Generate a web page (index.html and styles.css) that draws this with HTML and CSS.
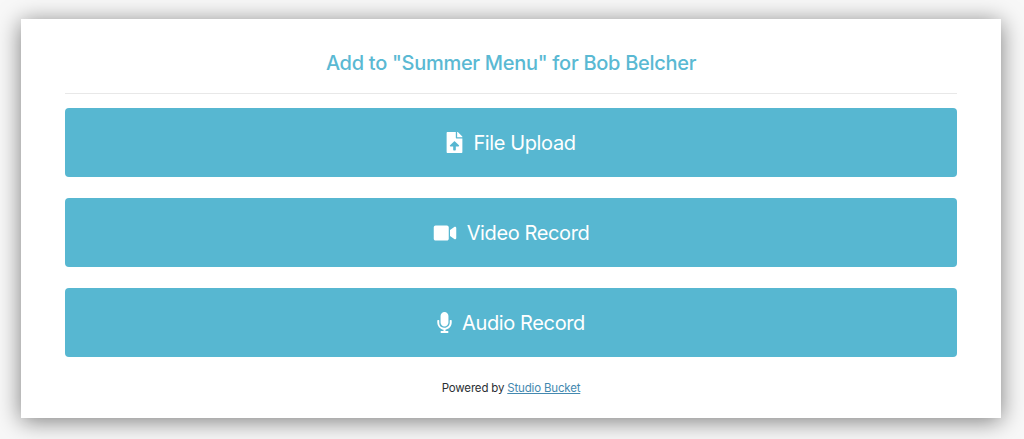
FILE: index.html
```html
<!DOCTYPE html>
<html lang="en">
<head>
<meta charset="utf-8">
<title>Add to Summer Menu</title>
<link rel="stylesheet" href="styles.css">
</head>
<body>
<main class="card">
  <h1 class="title">Add to "Summer Menu" for Bob Belcher</h1>
  <div class="actions">
    <a class="btn" href="#">
      <svg class="icon icon-file" viewBox="0 0 384 512"><path d="M224 136V0H24C10.7 0 0 10.7 0 24v464c0 13.3 10.7 24 24 24h336c13.3 0 24-10.7 24-24V160H248c-13.2 0-24-10.8-24-24zm65.18 216.01H224v80c0 8.84-7.16 16-16 16h-32c-8.84 0-16-7.16-16-16v-80H94.82c-14.28 0-21.41-17.29-11.27-27.36l96.42-95.7c6.65-6.61 17.39-6.61 24.04 0l96.42 95.7c10.15 10.07 3.03 27.36-11.25 27.36zM377 105L279.1 7c-4.5-4.5-10.6-7-17-7H256v128h128v-6.1c0-6.3-2.5-12.4-7-16.9z"/></svg>
      <span>File Upload</span>
    </a>
    <a class="btn" href="#">
      <svg class="icon icon-video" viewBox="0 0 576 512"><path d="M336.2 64H47.8C21.4 64 0 85.4 0 111.8v288.4C0 426.6 21.4 448 47.8 448h288.4c26.4 0 47.8-21.4 47.8-47.8V111.8c0-26.4-21.4-47.8-47.8-47.8zm189.4 37.7L416 177.3v157.4l109.6 75.5c21.2 14.6 50.4-.3 50.4-25.8V127.5c0-25.4-29.1-40.4-50.4-25.8z"/></svg>
      <span>Video Record</span>
    </a>
    <a class="btn" href="#">
      <svg class="icon icon-mic" viewBox="0 0 352 512"><path d="M176 352c53.02 0 96-42.98 96-96V96c0-53.02-42.98-96-96-96S80 42.98 80 96v160c0 53.02 42.98 96 96 96zm160-160h-16c-8.84 0-16 7.16-16 16v48c0 74.8-64.49 135.82-140.79 127.38C93.11 374.02 48 336.52 48 272.15V208c0-8.84-7.16-16-16-16H16c-8.84 0-16 7.16-16 16v40.16c0 89.64 63.97 169.55 152 181.69V464H96c-8.84 0-16 7.16-16 16v16c0 8.84 7.16 16 16 16h160c8.84 0 16-7.16 16-16v-16c0-8.84-7.16-16-16-16h-56v-33.77C285.71 418.47 352 344.9 352 256v-48c0-8.84-7.16-16-16-16z"/></svg>
      <span>Audio Record</span>
    </a>
  </div>
  <p class="powered">Powered by <a href="#">Studio Bucket</a></p>
</main>
</body>
</html>
```
FILE: styles.css
```css
html, body { margin: 0; height: 439px; overflow: hidden; }
body {
  background: #f8f8f8;
  padding: 19px 23px 21px 21px;
  box-sizing: border-box;
  font-family: Inter, "Liberation Sans", sans-serif;
}
.card {
  height: 399px;
  box-sizing: border-box;
  background: #fff;
  padding: 0 44px;
  box-shadow: 0 3px 22px rgba(0, 0, 0, 0.5);
}
.title {
  margin: 0;
  height: 75px;
  padding-top: 32px;
  box-sizing: border-box;
  border-bottom: 1px solid #e8e8e8;
  text-align: center;
  font-size: 20px;
  line-height: 24px;
  font-weight: 500;
  letter-spacing: -0.29px;
  color: #5ab9d3;
}
.actions {
  margin-top: 14px;
  display: flex;
  flex-direction: column;
  gap: 21px;
}
.btn {
  height: 69px;
  display: flex;
  align-items: center;
  justify-content: center;
  gap: 10px;
  background: #57b7d1;
  border-radius: 4px;
  color: #fff;
  text-decoration: none;
  font-size: 20px;
  letter-spacing: -0.38px;
}
.icon { fill: #fff; height: 20px; display: block; }
.icon-file { width: 17px; height: 21px; }
.icon-video { width: 24px; }
.icon-mic { width: 15px; height: 21px; }
.powered {
  margin: 24px 0 0;
  text-align: center;
  font-size: 11.5px;
  line-height: 15px;
  letter-spacing: -0.18px;
  color: #2b2f33;
}
.powered a { color: #4489b0; }
```
